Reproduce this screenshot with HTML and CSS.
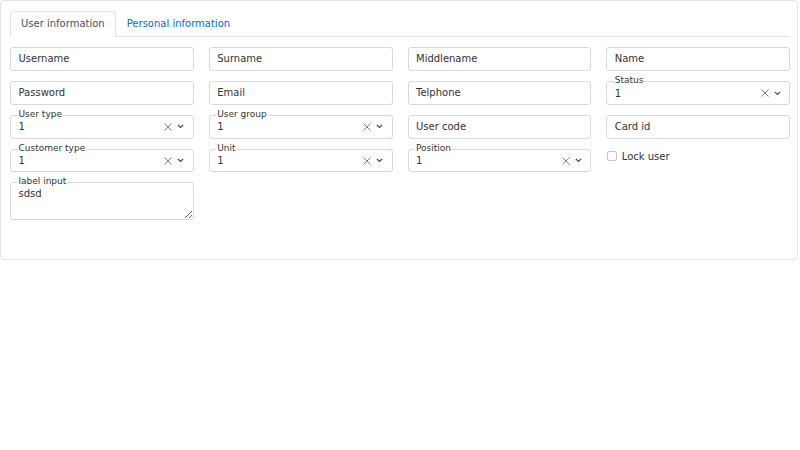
FILE: index.html
```html
<!DOCTYPE html>
<html lang="en">
<head>
<meta charset="utf-8">
<title>User</title>
<link rel="stylesheet" href="styles.css">
</head>
<body>
<div class="card">
  <ul class="nav-tabs">
    <li><a class="tab active">User information</a></li>
    <li><a class="tab">Personal information</a></li>
  </ul>
  <div class="tab-content">
    <div class="form-grid">
      <div class="field"><div class="input">Username</div></div>
      <div class="field"><div class="input">Surname</div></div>
      <div class="field"><div class="input">Middlename</div></div>
      <div class="field"><div class="input">Name</div></div>

      <div class="field"><div class="input">Password</div></div>
      <div class="field"><div class="input">Email</div></div>
      <div class="field"><div class="input">Telphone</div></div>
      <div class="field float">
        <span class="float-label">Status</span>
        <div class="select"><span class="value">1</span>
          <svg class="clear" viewBox="0 0 8 8" width="8" height="8"><path d="M0.5 0.5L7.5 7.5M7.5 0.5L0.5 7.5"/></svg>
          <svg class="chev" viewBox="0 0 7 5" width="7" height="5"><path d="M0.8 0.8L3.5 3.5L6.2 0.8"/></svg>
        </div>
      </div>

      <div class="field float">
        <span class="float-label">User type</span>
        <div class="select"><span class="value">1</span>
          <svg class="clear" viewBox="0 0 8 8" width="8" height="8"><path d="M0.5 0.5L7.5 7.5M7.5 0.5L0.5 7.5"/></svg>
          <svg class="chev" viewBox="0 0 7 5" width="7" height="5"><path d="M0.8 0.8L3.5 3.5L6.2 0.8"/></svg>
        </div>
      </div>
      <div class="field float">
        <span class="float-label">User group</span>
        <div class="select"><span class="value">1</span>
          <svg class="clear" viewBox="0 0 8 8" width="8" height="8"><path d="M0.5 0.5L7.5 7.5M7.5 0.5L0.5 7.5"/></svg>
          <svg class="chev" viewBox="0 0 7 5" width="7" height="5"><path d="M0.8 0.8L3.5 3.5L6.2 0.8"/></svg>
        </div>
      </div>
      <div class="field"><div class="input">User code</div></div>
      <div class="field"><div class="input">Card id</div></div>

      <div class="field float">
        <span class="float-label">Customer type</span>
        <div class="select"><span class="value">1</span>
          <svg class="clear" viewBox="0 0 8 8" width="8" height="8"><path d="M0.5 0.5L7.5 7.5M7.5 0.5L0.5 7.5"/></svg>
          <svg class="chev" viewBox="0 0 7 5" width="7" height="5"><path d="M0.8 0.8L3.5 3.5L6.2 0.8"/></svg>
        </div>
      </div>
      <div class="field float">
        <span class="float-label">Unit</span>
        <div class="select"><span class="value">1</span>
          <svg class="clear" viewBox="0 0 8 8" width="8" height="8"><path d="M0.5 0.5L7.5 7.5M7.5 0.5L0.5 7.5"/></svg>
          <svg class="chev" viewBox="0 0 7 5" width="7" height="5"><path d="M0.8 0.8L3.5 3.5L6.2 0.8"/></svg>
        </div>
      </div>
      <div class="field float">
        <span class="float-label">Position</span>
        <div class="select"><span class="value">1</span>
          <svg class="clear" viewBox="0 0 8 8" width="8" height="8"><path d="M0.5 0.5L7.5 7.5M7.5 0.5L0.5 7.5"/></svg>
          <svg class="chev" viewBox="0 0 7 5" width="7" height="5"><path d="M0.8 0.8L3.5 3.5L6.2 0.8"/></svg>
        </div>
      </div>
      <div class="field">
        <label class="form-check"><input type="checkbox" class="check"><span>Lock user</span></label>
      </div>

      <div class="field float tall">
        <span class="float-label">label input</span>
        <textarea class="textarea">sdsd</textarea>
      </div>
    </div>
  </div>
</div>
</body>
</html>
```

FILE: styles.css
```css
* { box-sizing: border-box; }
html, body { margin: 0; padding: 0; background: #fff; }
body {
  font-family: "DejaVu Sans", "Noto Sans", sans-serif;
  font-size: 10px;
  line-height: 15px;
  color: #333;
}
.card {
  width: 798px;
  border: 1px solid #e4e4e4;
  border-radius: 4px;
  padding: 10px 7px 39px 9px;
}
.nav-tabs {
  display: flex;
  list-style: none;
  margin: 0;
  padding: 0;
  border-bottom: 1px solid #e2e2e2;
}
.tab {
  display: block;
  padding: 3.8px 10px 5.2px 10px;
  border: 1px solid transparent;
  border-radius: 4px 4px 0 0;
  margin-bottom: -1px;
  color: #0071c1;
  cursor: pointer;
}
.tab.active {
  color: #495057;
  background: #fff;
  border-color: #e2e2e2 #e2e2e2 #fff;
}
.tab-content { padding-top: 10.5px; }
.form-grid {
  display: grid;
  grid-template-columns: repeat(4, 1fr);
  column-gap: 15px;
  row-gap: 10px;
}
.field { position: relative; height: 23.75px; }
.field.tall { height: 38px; }
.input, .select, .textarea {
  height: 100%;
  width: 100%;
  border: 1px solid #d9d9d9;
  border-radius: 3px;
  background: #fff;
  color: #333;
  font: inherit;
}
.input { padding: 2.8px 7.5px; }
.select {
  display: flex;
  align-items: center;
  padding: 0 8.5px 0 7.5px;
}
.select .value { flex: 1; }
.clear { fill: none; stroke: #777; stroke-width: 0.9; margin-right: 5px; }
.chev { fill: none; stroke: #444; stroke-width: 1.1; }
.float-label {
  position: absolute;
  top: -5.2px;
  left: 7.5px;
  padding: 0 1px;
  font-size: 9px;
  line-height: 1;
  background: #fff;
  color: #333;
  z-index: 1;
}
.textarea {
  display: block;
  padding: 2.8px 7.5px;
  resize: vertical;
  outline: none;
  margin: 0;
}
.form-check {
  display: flex;
  align-items: flex-start;
  line-height: 15px;
  cursor: pointer;
}
.check {
  appearance: none;
  -webkit-appearance: none;
  width: 10px;
  height: 10px;
  margin: 2.5px 5px 0 0.5px;
  border: 1px solid #c4c4c4;
  border-radius: 2px;
  background: #fff;
  flex: none;
}
```
